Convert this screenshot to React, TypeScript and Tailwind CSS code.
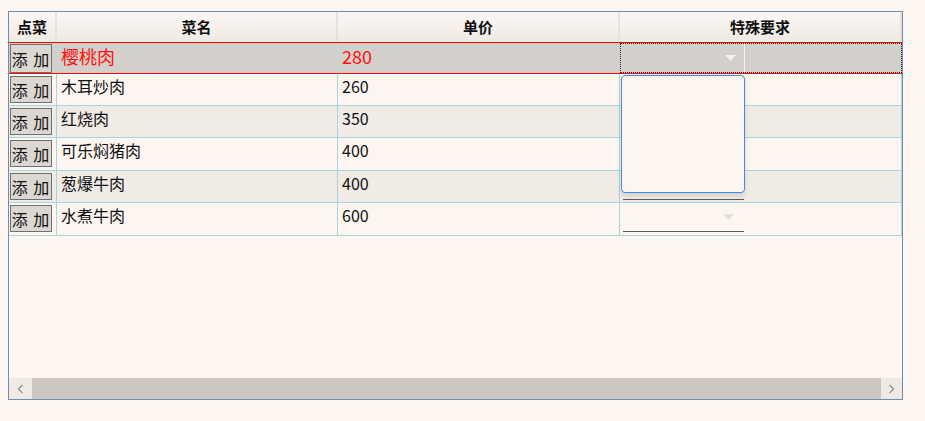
import React from "react";

type Dish = {
  name: string;
  price: number;
  height: number;
  alt: boolean;
};

const dishes: Dish[] = [
  { name: "木耳炒肉", price: 260, height: 32, alt: false },
  { name: "红烧肉", price: 350, height: 32, alt: true },
  { name: "可乐焖猪肉", price: 400, height: 33, alt: false },
  { name: "葱爆牛肉", price: 400, height: 32, alt: true },
  { name: "水煮牛肉", price: 600, height: 33, alt: false },
];

const font = { fontFamily: '"Noto Sans CJK SC", "Noto Sans", sans-serif' };

function Arrow({ color }: { color: string }) {
  return (
    <svg width="11" height="6" viewBox="0 0 11 6">
      <path d="M0 0 L11 0 L5.5 6 Z" fill={color} />
    </svg>
  );
}

function AddButton({ big }: { big?: boolean }) {
  return (
    <button
      type="button"
      className={`ml-[1px] w-[42px] border border-[#707070] bg-[#dcd7d1] text-[16px] leading-none tracking-[1px] text-[#111] ${
        big ? "mt-[1px] h-[29px]" : "mt-[2px] h-[27px]"
      }`}
    >
      添 加
    </button>
  );
}

export default function App() {
  return (
    <div className="h-[421px] w-[925px] bg-[#fdf6f0] pl-[8px] pt-[11px]" style={font}>
      <div className="relative flex h-[389px] w-[895px] flex-col border border-[#6f8cab]">
        {/* header */}
        <div className="flex h-[30px] bg-gradient-to-b from-[#fbf7f3] to-[#efe9e3] text-[15px] font-bold text-[#111]">
          <div className="flex w-[48px] items-center justify-center border-r-2 border-[#e6e1db]">点菜</div>
          <div className="flex w-[281px] items-center justify-center border-r-2 border-[#e6e1db]">菜名</div>
          <div className="flex w-[282px] items-center justify-center border-r-2 border-[#e6e1db]">单价</div>
          <div className="flex flex-1 items-center justify-center border-r-2 border-[#e6e1db]">特殊要求</div>
        </div>

        {/* selected row */}
        <div className="flex h-[32px] border-y border-[#ff0000] bg-[#d3cfca] text-[18px] text-[#ff1010]">
          <div className="w-[48px] border-r border-[#b9d8e0]">
            <AddButton big />
          </div>
          <div className="w-[281px] border-r border-[#b9d8e0] pl-[4px] leading-[26px]">樱桃肉</div>
          <div className="w-[282px] pl-[4px] leading-[26px]">280</div>
          <div className="flex flex-1 border border-dotted border-[#222]">
            <div className="flex w-[124px] items-center justify-end border-r border-[#f6f2ee] pr-[8px]">
              <Arrow color="#f4f1ee" />
            </div>
          </div>
        </div>

        {/* rows */}
        {dishes.map((d, i) => (
          <div
            key={d.name}
            className={`flex border-b border-[#a9d3de] text-[16px] text-[#111] ${d.alt ? "bg-[#f0ebe5]" : "bg-[#fdf6f0]"}`}
            style={{ height: d.height }}
          >
            <div className="w-[48px] border-r border-[#a9d3de]">
              <AddButton />
            </div>
            <div className="w-[281px] border-r border-[#a9d3de] pl-[4px] pt-[1px] leading-[22px]">{d.name}</div>
            <div className="w-[282px] border-r border-[#a9d3de] pl-[4px] pt-[1px] leading-[22px]">{d.price}</div>
            <div className="flex flex-1 border-r border-[#a9d3de] pl-[3px]">
              {i >= 3 && (
                <div className="flex h-[29px] w-[121px] items-center justify-end border-b border-[#5f5a55] pr-[10px]">
                  <Arrow color="#e2dfdc" />
                </div>
              )}
            </div>
          </div>
        ))}

        <div className="flex-1" />

        {/* horizontal scrollbar */}
        <div className="flex h-[21px]">
          <div className="flex w-[23px] items-center justify-center bg-[#efeae4]">
            <svg width="7" height="10" viewBox="0 0 7 10">
              <path d="M5.5 1 L1.5 5 L5.5 9" fill="none" stroke="#9a958f" strokeWidth="1.5" />
            </svg>
          </div>
          <div className="flex-1 bg-[#cbc6c0]" />
          <div className="flex w-[21px] items-center justify-center bg-[#efeae4]">
            <svg width="7" height="10" viewBox="0 0 7 10">
              <path d="M1.5 1 L5.5 5 L1.5 9" fill="none" stroke="#9a958f" strokeWidth="1.5" />
            </svg>
          </div>
        </div>

        {/* open dropdown popup */}
        <div className="absolute left-[612px] top-[63px] h-[118px] w-[124px] rounded-[4px] border border-[#3b8ee4] bg-[#fdf6f0] shadow-[0_3px_5px_rgba(0,0,0,0.12)]" />
      </div>
    </div>
  );
}
